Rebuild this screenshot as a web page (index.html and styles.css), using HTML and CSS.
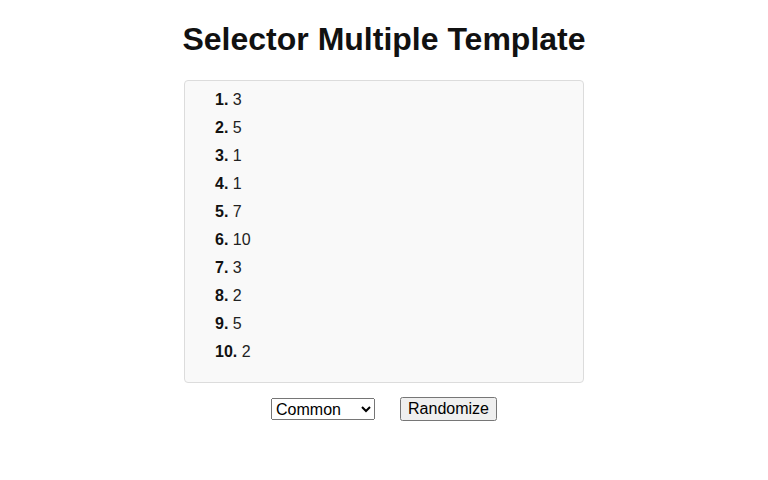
FILE: index.html
```html
<!DOCTYPE html>
<html>
<head>
<meta charset="utf-8">
<link rel="stylesheet" href="styles.css">
</head>
<body>
<h1 class="title">Selector Multiple Template</h1>
<div class="panel">
  <ol class="results">
    <li><span class="num">1.</span> 3</li>
    <li><span class="num">2.</span> 5</li>
    <li><span class="num">3.</span> 1</li>
    <li><span class="num">4.</span> 1</li>
    <li><span class="num">5.</span> 7</li>
    <li><span class="num">6.</span> 10</li>
    <li><span class="num">7.</span> 3</li>
    <li><span class="num">8.</span> 2</li>
    <li><span class="num">9.</span> 5</li>
    <li><span class="num">10.</span> 2</li>
  </ol>
</div>
<div class="controls">
  <select class="mode">
    <option>Common</option>
    <option>Rare</option>
  </select>
  <button class="go">Randomize</button>
</div>
</body>
</html>
```
FILE: styles.css
```css
body {
  margin: 0;
  font-family: "Liberation Sans", Arial, sans-serif;
  font-size: 16px;
  color: #222;
  background: #fff;
}
.title {
  text-align: center;
  font-size: 32px;
  margin: 21px 0 22px;
  color: #111;
}
.panel {
  margin: 0 auto;
  background: #f9f9f9;
  border: 1px solid #dcdcdc;
  border-radius: 4px;
  padding: 5px 0 16px 30px;
  box-sizing: border-box;
  width: 400px;
}
.results {
  list-style: none;
  margin: 0;
  padding: 0;
}
.results li {
  line-height: 28px;
}
.num {
  font-weight: bold;
  color: #111;
}
.controls {
  display: flex;
  justify-content: center;
  align-items: center;
  gap: 25px;
  margin-top: 14px;
}
.mode {
  font: inherit;
  width: 104px;
  height: 22px;
  color: #000;
}
.go {
  font: inherit;
  color: #000;
}
```
